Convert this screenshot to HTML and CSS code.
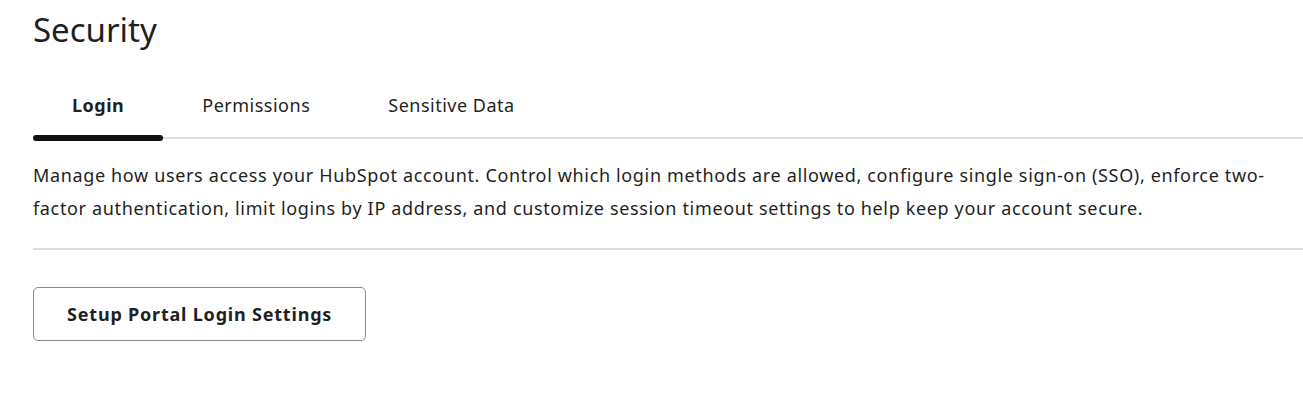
FILE: index.html
```html
<!DOCTYPE html>
<html lang="en">
<head>
    <meta charset="UTF-8">
    <meta name="viewport" content="width=device-width, initial-scale=1.0">
    <title>Security</title>
    <link rel="stylesheet" href="styles.css">
</head>
<body>
    <div class="page">
        <h1 class="title">Security</h1>
        <div class="tabs">
            <button class="tab active">Login</button>
            <button class="tab">Permissions</button>
            <button class="tab">Sensitive Data</button>
        </div>
        <p class="description">Manage how users access your HubSpot account. Control which login methods are allowed, configure single sign-on (SSO), enforce two-factor authentication, limit logins by IP address, and customize session timeout settings to help keep your account secure.</p>
        <div class="actions">
            <button class="setup-btn">Setup Portal Login Settings</button>
        </div>
    </div>
</body>
</html>
```

FILE: styles.css
```css
body {
    margin: 0;
    background: #fff;
    color: #1f1f1f;
    font-family: "Noto Sans", Lato, sans-serif;
}
.page {
    padding-left: 33px;
}
.title {
    margin: 0;
    padding-top: 9px;
    font-size: 33px;
    font-weight: 400;
    line-height: 42px;
}
.tabs {
    display: flex;
    margin-top: 38px;
    border-bottom: 2px solid #dcdcdc;
}
.tab {
    position: relative;
    padding: 0 39px;
    height: 48px;
    border: none;
    background: none;
    font-family: inherit;
    font-size: 18px;
    letter-spacing: 0.5px;
    color: #1f1f1f;
    line-height: 24px;
    padding-bottom: 17px;
    cursor: pointer;
}
.tab.active {
    font-weight: 700;
}
.tab.active::after {
    content: "";
    position: absolute;
    left: 0;
    right: 0;
    bottom: -4px;
    height: 6px;
    border-radius: 3px;
    background: #111;
}
.description {
    margin: 0;
    padding: 20px 10px 23px 0;
    font-size: 18px;
    letter-spacing: 0.65px;
    line-height: 33px;
    border-bottom: 2px solid #dcdcdc;
}
.actions {
    padding-top: 37px;
}
.setup-btn {
    height: 54px;
    padding: 0 33px;
    background: #fff;
    border: 1px solid #8a8a8a;
    border-radius: 5px;
    font-family: inherit;
    font-size: 18px;
    font-weight: 700;
    letter-spacing: 0.8px;
    color: #1f1f1f;
    cursor: pointer;
}
```
